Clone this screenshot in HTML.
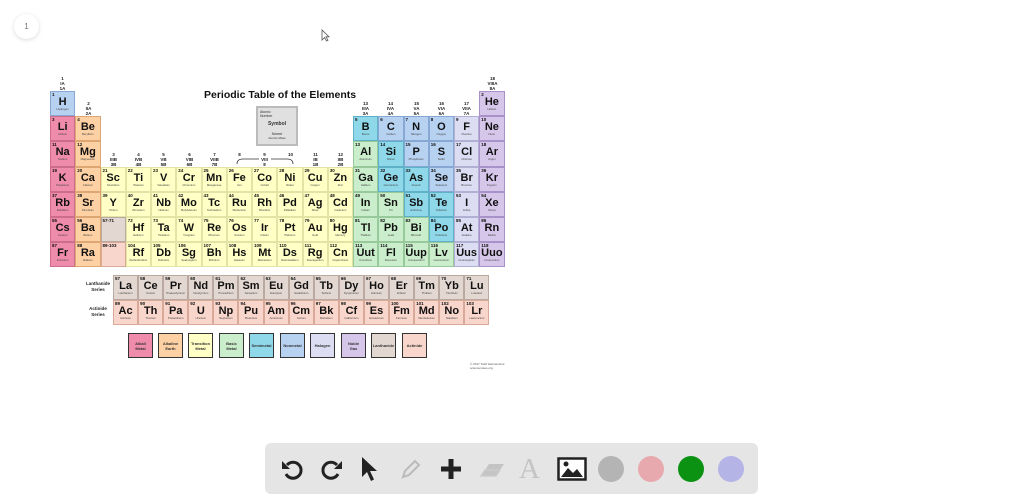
<!DOCTYPE html>
<html><head><meta charset="utf-8"><style>
*{margin:0;padding:0;box-sizing:border-box}
body{width:1024px;height:502px;background:#fff;position:relative;overflow:hidden;font-family:"Liberation Sans",sans-serif}
.pg{position:absolute;left:14px;top:14px;width:25px;height:25px;border-radius:50%;box-shadow:0 1px 4px rgba(0,0,0,.15);font-size:8px;color:#777;text-align:center;line-height:25px}
.grid{position:absolute;left:50px;top:91px;display:grid;grid-template-columns:repeat(18,25.25px);grid-auto-rows:25.2px}
.lg{position:absolute;left:113px;top:275px;display:grid;grid-template-columns:repeat(15,25.1px);grid-auto-rows:25px}
.e{position:relative;border:1px solid;overflow:hidden;text-align:center;color:#111}
.e i{position:absolute;left:1px;top:0;font-style:normal;font-size:4.5px;font-weight:bold}
.e b{display:block;font-size:11px;line-height:12px;margin-top:4px}
.e s{display:block;text-decoration:none;font-size:2.8px;line-height:3.5px;color:#444;white-space:nowrap}
.al{background:#ef8cab;border-color:#cc6d8b}
.ae{background:#fdd1a3;border-color:#dda673}
.tm{background:#ffffc6;border-color:#e3e3a5}
.bm{background:#caedcb;border-color:#98c99b}
.sm{background:#8fd8e9;border-color:#5fb1c8}
.nm{background:#b7d1f1;border-color:#86a8d2}
.ha{background:#dcdcf2;border-color:#b0b0d2}
.ng{background:#d6c6ea;border-color:#a892c9}
.la{background:#e3d7d1;border-color:#b9a9a1}
.ac{background:#f9d6cb;border-color:#d9aa9a}
.gl{position:absolute;font-size:4.5px;font-weight:bold;text-align:center;width:25px;line-height:5px;color:#222}
.title{position:absolute;left:204px;top:89px;font-size:10.5px;font-weight:bold;color:#111}
.key{position:absolute;left:256px;top:106px;width:42px;height:40px;background:#e0e0e0;border:2px solid #bbb;font-size:4px;color:#333;padding:2px}
.lab{position:absolute;font-size:4.5px;font-weight:bold;text-align:center;width:30px;color:#222;line-height:6px}
.leg{position:absolute;top:333px;width:25px;height:25px;border:1px solid;font-size:4px;font-weight:bold;display:flex;align-items:center;justify-content:center;text-align:center;color:#333}
.tb{position:absolute;left:265px;top:443px;width:493px;height:51px;background:#e5e5e5;border-radius:6px}
.dot{position:absolute;top:456px;width:26px;height:26px;border-radius:50%}
</style></head><body>
<div class="pg">1</div>
<svg style="position:absolute;left:321px;top:29px" width="9" height="13" viewBox="0 0 9 13"><path d="M1 1v10l2.5-2.5 2 3.5 1.5-.8-2-3.4H8z" fill="#fff" stroke="#555" stroke-width=".8"/></svg>

<div class="title">Periodic Table of the Elements</div>
<div class="key"><div style="font-size:3.5px">Atomic<br>Number</div><div style="font-size:5px;font-weight:bold;text-align:center;margin-top:3px">Symbol</div><div style="text-align:center;margin-top:4px">Name</div><div style="text-align:center;font-size:3px">Atomic Mass</div></div>

<div class="gl" style="left:50px;top:76px">1<br>IA<br>1A</div>
<div class="gl" style="left:76px;top:101px">2<br>IIA<br>2A</div>
<div class="gl" style="left:101px;top:152px">3<br>IIIB<br>3B</div>
<div class="gl" style="left:126px;top:152px">4<br>IVB<br>4B</div>
<div class="gl" style="left:151px;top:152px">5<br>VB<br>5B</div>
<div class="gl" style="left:177px;top:152px">6<br>VIB<br>6B</div>
<div class="gl" style="left:202px;top:152px">7<br>VIIB<br>7B</div>
<div class="gl" style="left:227px;top:152px">8</div>
<div class="gl" style="left:252px;top:152px">9<br>VIII<br>8</div>
<div class="gl" style="left:278px;top:152px">10</div>
<div class="gl" style="left:303px;top:152px">11<br>IB<br>1B</div>
<div class="gl" style="left:328px;top:152px">12<br>IIB<br>2B</div>
<div class="gl" style="left:353px;top:101px">13<br>IIIA<br>3A</div>
<div class="gl" style="left:378px;top:101px">14<br>IVA<br>4A</div>
<div class="gl" style="left:404px;top:101px">15<br>VA<br>5A</div>
<div class="gl" style="left:429px;top:101px">16<br>VIA<br>6A</div>
<div class="gl" style="left:454px;top:101px">17<br>VIIA<br>7A</div>
<div class="gl" style="left:480px;top:76px">18<br>VIIIA<br>8A</div>
<svg style="position:absolute;left:235px;top:155px" width="60" height="10"><path d="M2 9Q2 4 8 4H24M36 4H52Q58 4 58 9" fill="none" stroke="#333" stroke-width=".8"/></svg>

<div class="grid">
<div class="e nm"><i>1</i><b>H</b><s>Hydrogen</s></div><div style="grid-column:span 16"></div><div class="e ng"><i>2</i><b>He</b><s>Helium</s></div>
<div class="e al"><i>3</i><b>Li</b><s>Lithium</s></div><div class="e ae"><i>4</i><b>Be</b><s>Beryllium</s></div><div style="grid-column:span 10"></div><div class="e sm"><i>5</i><b>B</b><s>Boron</s></div><div class="e nm"><i>6</i><b>C</b><s>Carbon</s></div><div class="e nm"><i>7</i><b>N</b><s>Nitrogen</s></div><div class="e nm"><i>8</i><b>O</b><s>Oxygen</s></div><div class="e ha"><i>9</i><b>F</b><s>Fluorine</s></div><div class="e ng"><i>10</i><b>Ne</b><s>Neon</s></div>
<div class="e al"><i>11</i><b>Na</b><s>Sodium</s></div><div class="e ae"><i>12</i><b>Mg</b><s>Magnesium</s></div><div style="grid-column:span 10"></div><div class="e bm"><i>13</i><b>Al</b><s>Aluminum</s></div><div class="e sm"><i>14</i><b>Si</b><s>Silicon</s></div><div class="e nm"><i>15</i><b>P</b><s>Phosphorus</s></div><div class="e nm"><i>16</i><b>S</b><s>Sulfur</s></div><div class="e ha"><i>17</i><b>Cl</b><s>Chlorine</s></div><div class="e ng"><i>18</i><b>Ar</b><s>Argon</s></div>
<div class="e al"><i>19</i><b>K</b><s>Potassium</s></div><div class="e ae"><i>20</i><b>Ca</b><s>Calcium</s></div><div class="e tm"><i>21</i><b>Sc</b><s>Scandium</s></div><div class="e tm"><i>22</i><b>Ti</b><s>Titanium</s></div><div class="e tm"><i>23</i><b>V</b><s>Vanadium</s></div><div class="e tm"><i>24</i><b>Cr</b><s>Chromium</s></div><div class="e tm"><i>25</i><b>Mn</b><s>Manganese</s></div><div class="e tm"><i>26</i><b>Fe</b><s>Iron</s></div><div class="e tm"><i>27</i><b>Co</b><s>Cobalt</s></div><div class="e tm"><i>28</i><b>Ni</b><s>Nickel</s></div><div class="e tm"><i>29</i><b>Cu</b><s>Copper</s></div><div class="e tm"><i>30</i><b>Zn</b><s>Zinc</s></div><div class="e bm"><i>31</i><b>Ga</b><s>Gallium</s></div><div class="e sm"><i>32</i><b>Ge</b><s>Germanium</s></div><div class="e sm"><i>33</i><b>As</b><s>Arsenic</s></div><div class="e nm"><i>34</i><b>Se</b><s>Selenium</s></div><div class="e ha"><i>35</i><b>Br</b><s>Bromine</s></div><div class="e ng"><i>36</i><b>Kr</b><s>Krypton</s></div>
<div class="e al"><i>37</i><b>Rb</b><s>Rubidium</s></div><div class="e ae"><i>38</i><b>Sr</b><s>Strontium</s></div><div class="e tm"><i>39</i><b>Y</b><s>Yttrium</s></div><div class="e tm"><i>40</i><b>Zr</b><s>Zirconium</s></div><div class="e tm"><i>41</i><b>Nb</b><s>Niobium</s></div><div class="e tm"><i>42</i><b>Mo</b><s>Molybdenum</s></div><div class="e tm"><i>43</i><b>Tc</b><s>Technetium</s></div><div class="e tm"><i>44</i><b>Ru</b><s>Ruthenium</s></div><div class="e tm"><i>45</i><b>Rh</b><s>Rhodium</s></div><div class="e tm"><i>46</i><b>Pd</b><s>Palladium</s></div><div class="e tm"><i>47</i><b>Ag</b><s>Silver</s></div><div class="e tm"><i>48</i><b>Cd</b><s>Cadmium</s></div><div class="e bm"><i>49</i><b>In</b><s>Indium</s></div><div class="e bm"><i>50</i><b>Sn</b><s>Tin</s></div><div class="e sm"><i>51</i><b>Sb</b><s>Antimony</s></div><div class="e sm"><i>52</i><b>Te</b><s>Tellurium</s></div><div class="e ha"><i>53</i><b>I</b><s>Iodine</s></div><div class="e ng"><i>54</i><b>Xe</b><s>Xenon</s></div>
<div class="e al"><i>55</i><b>Cs</b><s>Cesium</s></div><div class="e ae"><i>56</i><b>Ba</b><s>Barium</s></div><div class="e la"><i>57-71</i></div><div class="e tm"><i>72</i><b>Hf</b><s>Hafnium</s></div><div class="e tm"><i>73</i><b>Ta</b><s>Tantalum</s></div><div class="e tm"><i>74</i><b>W</b><s>Tungsten</s></div><div class="e tm"><i>75</i><b>Re</b><s>Rhenium</s></div><div class="e tm"><i>76</i><b>Os</b><s>Osmium</s></div><div class="e tm"><i>77</i><b>Ir</b><s>Iridium</s></div><div class="e tm"><i>78</i><b>Pt</b><s>Platinum</s></div><div class="e tm"><i>79</i><b>Au</b><s>Gold</s></div><div class="e tm"><i>80</i><b>Hg</b><s>Mercury</s></div><div class="e bm"><i>81</i><b>Tl</b><s>Thallium</s></div><div class="e bm"><i>82</i><b>Pb</b><s>Lead</s></div><div class="e bm"><i>83</i><b>Bi</b><s>Bismuth</s></div><div class="e sm"><i>84</i><b>Po</b><s>Polonium</s></div><div class="e ha"><i>85</i><b>At</b><s>Astatine</s></div><div class="e ng"><i>86</i><b>Rn</b><s>Radon</s></div>
<div class="e al"><i>87</i><b>Fr</b><s>Francium</s></div><div class="e ae"><i>88</i><b>Ra</b><s>Radium</s></div><div class="e ac"><i>89-103</i></div><div class="e tm"><i>104</i><b>Rf</b><s>Rutherfordium</s></div><div class="e tm"><i>105</i><b>Db</b><s>Dubnium</s></div><div class="e tm"><i>106</i><b>Sg</b><s>Seaborgium</s></div><div class="e tm"><i>107</i><b>Bh</b><s>Bohrium</s></div><div class="e tm"><i>108</i><b>Hs</b><s>Hassium</s></div><div class="e tm"><i>109</i><b>Mt</b><s>Meitnerium</s></div><div class="e tm"><i>110</i><b>Ds</b><s>Darmstadtium</s></div><div class="e tm"><i>111</i><b>Rg</b><s>Roentgenium</s></div><div class="e tm"><i>112</i><b>Cn</b><s>Copernicium</s></div><div class="e bm"><i>113</i><b>Uut</b><s>Ununtrium</s></div><div class="e bm"><i>114</i><b>Fl</b><s>Flerovium</s></div><div class="e bm"><i>115</i><b>Uup</b><s>Ununpentium</s></div><div class="e bm"><i>116</i><b>Lv</b><s>Livermorium</s></div><div class="e ha"><i>117</i><b>Uus</b><s>Ununseptium</s></div><div class="e ng"><i>118</i><b>Uuo</b><s>Ununoctium</s></div>
</div>

<div class="lab" style="left:83px;top:281px">Lanthanide<br>Series</div>
<div class="lab" style="left:83px;top:306px">Actinide<br>Series</div>
<div class="lg">
<div class="e la"><i>57</i><b>La</b><s>Lanthanum</s></div><div class="e la"><i>58</i><b>Ce</b><s>Cerium</s></div><div class="e la"><i>59</i><b>Pr</b><s>Praseodymium</s></div><div class="e la"><i>60</i><b>Nd</b><s>Neodymium</s></div><div class="e la"><i>61</i><b>Pm</b><s>Promethium</s></div><div class="e la"><i>62</i><b>Sm</b><s>Samarium</s></div><div class="e la"><i>63</i><b>Eu</b><s>Europium</s></div><div class="e la"><i>64</i><b>Gd</b><s>Gadolinium</s></div><div class="e la"><i>65</i><b>Tb</b><s>Terbium</s></div><div class="e la"><i>66</i><b>Dy</b><s>Dysprosium</s></div><div class="e la"><i>67</i><b>Ho</b><s>Holmium</s></div><div class="e la"><i>68</i><b>Er</b><s>Erbium</s></div><div class="e la"><i>69</i><b>Tm</b><s>Thulium</s></div><div class="e la"><i>70</i><b>Yb</b><s>Ytterbium</s></div><div class="e la"><i>71</i><b>Lu</b><s>Lutetium</s></div>
<div class="e ac"><i>89</i><b>Ac</b><s>Actinium</s></div><div class="e ac"><i>90</i><b>Th</b><s>Thorium</s></div><div class="e ac"><i>91</i><b>Pa</b><s>Protactinium</s></div><div class="e ac"><i>92</i><b>U</b><s>Uranium</s></div><div class="e ac"><i>93</i><b>Np</b><s>Neptunium</s></div><div class="e ac"><i>94</i><b>Pu</b><s>Plutonium</s></div><div class="e ac"><i>95</i><b>Am</b><s>Americium</s></div><div class="e ac"><i>96</i><b>Cm</b><s>Curium</s></div><div class="e ac"><i>97</i><b>Bk</b><s>Berkelium</s></div><div class="e ac"><i>98</i><b>Cf</b><s>Californium</s></div><div class="e ac"><i>99</i><b>Es</b><s>Einsteinium</s></div><div class="e ac"><i>100</i><b>Fm</b><s>Fermium</s></div><div class="e ac"><i>101</i><b>Md</b><s>Mendelevium</s></div><div class="e ac"><i>102</i><b>No</b><s>Nobelium</s></div><div class="e ac"><i>103</i><b>Lr</b><s>Lawrencium</s></div>
</div>

<div class="leg al" style="left:128px">Alkali<br>Metal</div>
<div class="leg ae" style="left:158px">Alkaline<br>Earth</div>
<div class="leg tm" style="left:188px">Transition<br>Metal</div>
<div class="leg bm" style="left:219px">Basic<br>Metal</div>
<div class="leg sm" style="left:249px">Semimetal</div>
<div class="leg nm" style="left:280px">Nonmetal</div>
<div class="leg ha" style="left:310px">Halogen</div>
<div class="leg ng" style="left:341px">Noble<br>Gas</div>
<div class="leg la" style="left:371px">Lanthanide</div>
<div class="leg ac" style="left:402px">Actinide</div>
<div style="position:absolute;left:470px;top:362px;font-size:3px;color:#555;line-height:4px">© 2017 Todd Helmenstine<br>sciencenotes.org</div>

<div class="tb"></div>
<svg style="position:absolute;left:279px;top:456px" width="26" height="26" viewBox="0 0 26 26"><path d="M8 9A8 8 0 1 1 7 18" fill="none" stroke="#222" stroke-width="3"/><path d="M3 5V13H11z" fill="#222"/></svg>
<svg style="position:absolute;left:319px;top:456px" width="26" height="26" viewBox="0 0 26 26"><path d="M18 9A8 8 0 1 0 19 18" fill="none" stroke="#222" stroke-width="3"/><path d="M23 5V13H15z" fill="#222"/></svg>
<svg style="position:absolute;left:359px;top:455px" width="22" height="28" viewBox="0 0 22 28"><path d="M3 2V22L8 17L12 26L15 24.5L11 16H18z" fill="#222"/></svg>
<svg style="position:absolute;left:399px;top:457px" width="24" height="24" viewBox="0 0 24 24"><path d="M4 20L6 14L16 4L20 8L10 18z" fill="none" stroke="#bbb" stroke-width="2"/></svg>
<svg style="position:absolute;left:439px;top:457px" width="24" height="24" viewBox="0 0 24 24"><path d="M12 2V22M2 12H22" stroke="#222" stroke-width="5"/></svg>
<svg style="position:absolute;left:477px;top:458px" width="30" height="22" viewBox="0 0 30 22"><path d="M4 18L12 6H27L19 18z" fill="#c4c4c4"/><path d="M4 18L8 12H23L19 18z" fill="none" stroke="#ccc" stroke-width="1.5"/></svg>
<div style="position:absolute;left:519px;top:453px;font-family:'Liberation Serif',serif;font-size:29px;color:#c4c4c4">A</div>
<svg style="position:absolute;left:557px;top:456px" width="30" height="26" viewBox="0 0 30 26"><rect x="1.5" y="2.5" width="27" height="21" fill="#fff" stroke="#222" stroke-width="2.5"/><path d="M4 21L11 12L16 17L20 13L26 21z" fill="#222"/><circle cx="9" cy="8" r="2.5" fill="#222"/></svg>
<div class="dot" style="left:598px;background:#b4b4b4"></div>
<div class="dot" style="left:638px;background:#e7a9ae"></div>
<div class="dot" style="left:678px;background:#0c9213"></div>
<div class="dot" style="left:718px;background:#b4b4e6"></div>
</body></html>
